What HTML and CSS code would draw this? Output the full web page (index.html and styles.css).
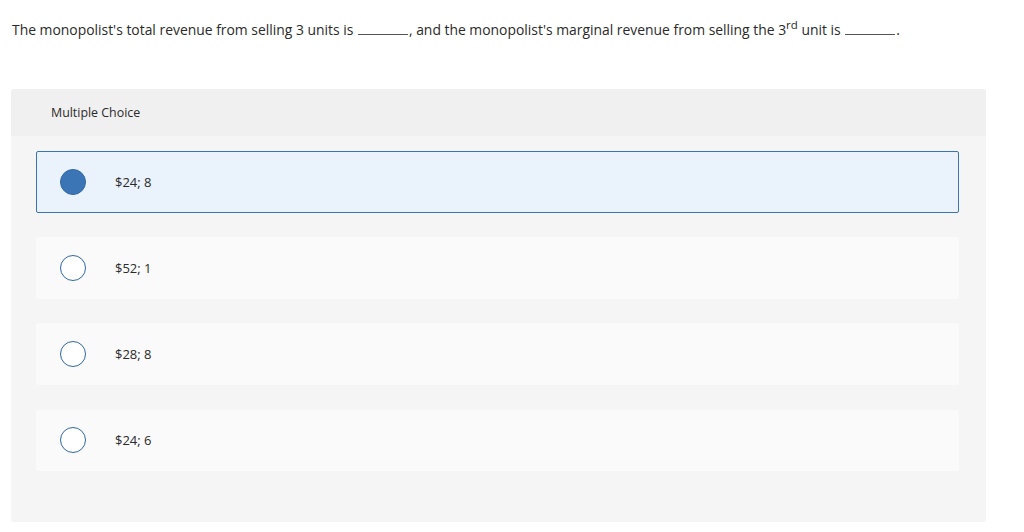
FILE: index.html
```html
<!DOCTYPE html>
<html>
<head>
<meta charset="utf-8">
<link rel="stylesheet" href="styles.css">
</head>
<body>
<p class="question">The monopolist's total revenue from selling 3 units is <span class="blank"></span>, and the monopolist's marginal revenue from selling the 3<sup>rd</sup> unit is <span class="blank"></span>.</p>
<div class="mc">
  <div class="mc-head">Multiple Choice</div>
  <div class="mc-body">
    <div class="opt selected"><span class="radio"></span><span class="label">$24; 8</span></div>
    <div class="opt"><span class="radio"></span><span class="label">$52; 1</span></div>
    <div class="opt"><span class="radio"></span><span class="label">$28; 8</span></div>
    <div class="opt"><span class="radio"></span><span class="label">$24; 6</span></div>
  </div>
</div>
</body>
</html>
```
FILE: styles.css
```css
html, body { margin: 0; padding: 0; background: #fff; }
body { font-family: "Open Sans", "Liberation Sans", sans-serif; color: #2a2a2a; }
.question { margin: 0; padding: 20px 0 0 12px; font-size: 13.9px; line-height: 20px; height: 89px; box-sizing: border-box; }
.question sup { font-size: 11.5px; line-height: 0; vertical-align: 6px; }
.blank { display: inline-block; width: 50px; border-bottom: 1px solid #555; margin: 0 1px; }
.mc { margin-left: 11px; width: 975px; background: #f5f5f5; border-radius: 3px; }
.mc-head { background: #f0f0f0; height: 47px; display: flex; align-items: center; padding-left: 40px; font-size: 12.4px; border-radius: 3px 3px 0 0; }
.mc-body { padding: 15px 27px 51px 25px; display: flex; flex-direction: column; gap: 24.7px; }
.opt { height: 61.5px; box-sizing: border-box; background: #fafafa; border-radius: 3px; display: flex; align-items: center; padding-left: 23px; font-size: 13px; border: 1px solid transparent; }
.opt.selected { background: #eaf2fb; border-color: #3a74b8; border-radius: 2px; }
.radio { width: 26px; height: 26px; box-sizing: border-box; border: 1px solid #2f66a6; border-radius: 50%; background: #fff; flex: none; }
.opt.selected .radio { background: #3c75b6; border-color: #2f66a6; }
.label { margin-left: 29px; }
```
